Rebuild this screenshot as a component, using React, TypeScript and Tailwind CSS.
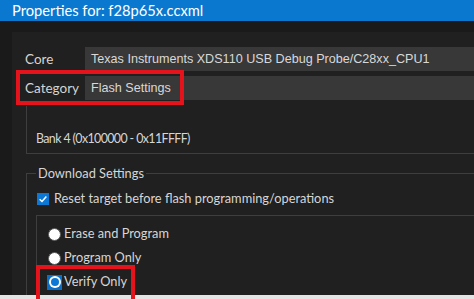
const ui = { fontFamily: "Lato, 'Noto Sans', sans-serif" };

function Radio({ label, checked }: { label: string; checked?: boolean }) {
  return (
    <div className="flex items-center h-[24px] pl-[11px]">
      {checked ? (
        <span className="w-[15px] h-[15px] -ml-[1px] -mr-[1px] bg-[#0a6fc7] flex items-center justify-center">
          <span className="w-[12px] h-[12px] rounded-full bg-white flex items-center justify-center">
            <span className="w-[8px] h-[8px] rounded-full bg-[#0a78d4]" />
          </span>
        </span>
      ) : (
        <span className="w-[13px] h-[13px] rounded-full bg-white border border-[#555]" />
      )}
      <span className="ml-[3px] text-[12.8px] text-[#d6d6d6]">{label}</span>
    </div>
  );
}

export default function App() {
  return (
    <div className="w-[474px] h-[299px] overflow-hidden bg-[#1a1a1a] flex flex-col" style={ui}>
      <div className="h-[21px] shrink-0 bg-[#0b78cf] pl-[12px] flex items-center text-white text-[14.7px]">
        Properties for: f28p65x.ccxml
      </div>

      <div className="flex-1 pt-[11px] pl-[12px] flex flex-col min-h-0">
        <div className="flex-1 bg-[#202020] flex flex-col min-h-0">
          <div className="pt-[15px] flex flex-col gap-[5px]">
            <div className="flex items-center h-[24px]">
              <span className="w-[73px] pl-[13px] text-[13.5px] text-[#d4d4d4]">Core</span>
              <div
                className="flex-1 h-full bg-[#383838] pl-[6px] flex items-center text-[12.6px] text-[#d8d8d8] whitespace-nowrap overflow-hidden"
                style={{ fontFamily: "'Liberation Sans', Arial, sans-serif" }}
              >
                Texas Instruments XDS110 USB Debug Probe/C28xx_CPU1
              </div>
            </div>
            <div className="relative flex items-center h-[24px]">
              <span className="w-[73px] pl-[13px] text-[13.5px] text-[#d4d4d4]">Category</span>
              <div
                className="flex-1 h-full bg-[#383838] pl-[6px] flex items-center text-[12.6px] text-[#d8d8d8]"
                style={{ fontFamily: "'Liberation Sans', Arial, sans-serif" }}
              >
                Flash Settings
              </div>
              <div className="absolute left-[4px] top-[-6px] w-[168px] h-[35px] border-[4px] border-[#e5141c]" />
            </div>
          </div>

          <div className="ml-[14px] mt-[6px] h-[48px] border-l border-b border-[#3e3e3e] flex items-center pl-[9px] pt-[19px] text-[12.4px] tracking-[-0.6px] text-[#d6d6d6]">
            Bank 4 (0x100000 - 0x11FFFF)
          </div>

          <fieldset className="ml-[14px] mt-[11px] flex-1 border-l border-t border-[#3e3e3e] min-h-0">
            <legend className="ml-[9px] px-[2px] text-[12.8px] text-[#d6d6d6] leading-[16px]">Download Settings</legend>
            <div className="flex items-center h-[18px] mt-[9px] pl-[10px]">
              <span className="w-[12px] h-[12px] bg-[#0a78d4] flex items-center justify-center">
                <svg viewBox="0 0 12 12" className="w-[10px] h-[10px]">
                  <path d="M2 6.2 L4.8 9 L10 3" fill="none" stroke="white" strokeWidth="1.8" />
                </svg>
              </span>
              <span className="ml-[5px] text-[12.8px] text-[#d6d6d6] whitespace-nowrap">
                Reset target before flash programming/operations
              </span>
            </div>
            <div className="ml-[9px] mt-[7px] border-l border-t border-[#3e3e3e] pt-[6px] flex flex-col h-[90px]">
              <Radio label="Erase and Program" />
              <Radio label="Program Only" />
              <div className="relative">
                <Radio label="Verify Only" checked />
                <div className="absolute left-[-1px] top-[-5px] w-[99px] h-[40px] border-[4px] border-[#e5141c]" />
              </div>
            </div>
          </fieldset>
        </div>
      </div>
      <div className="h-[4px] shrink-0 bg-[#e4e4e4]" />
    </div>
  );
}
